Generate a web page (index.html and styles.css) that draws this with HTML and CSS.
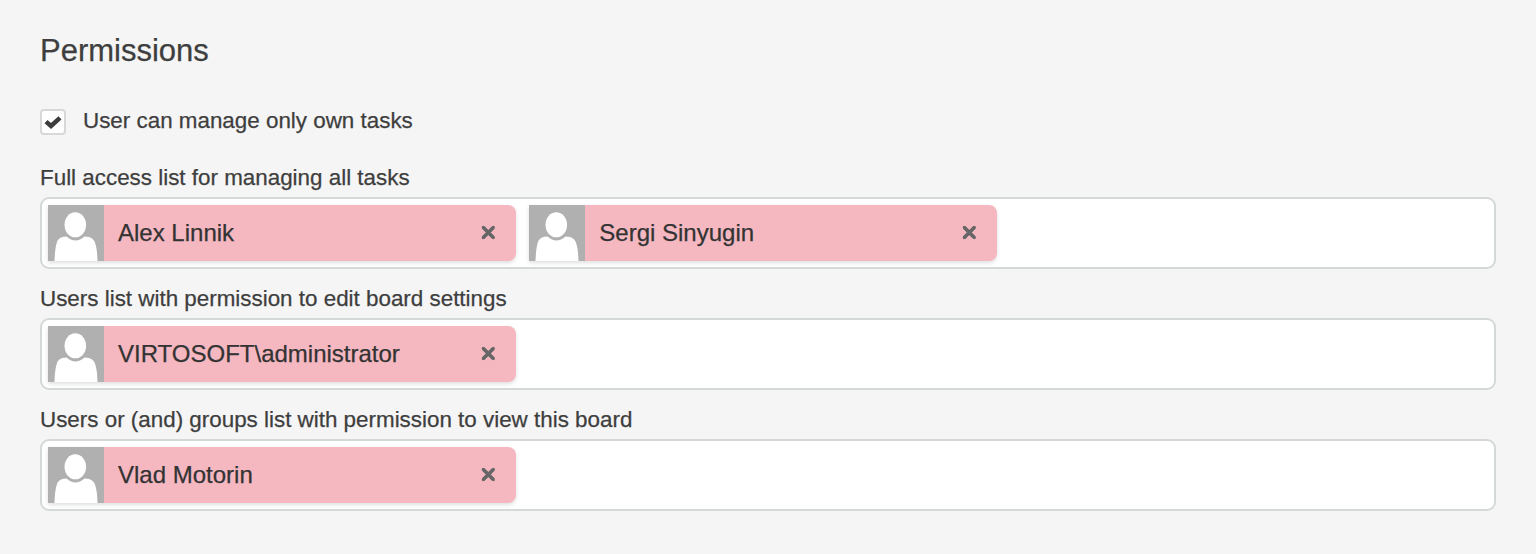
FILE: index.html
```html
<!doctype html>
<html lang="en">
<head>
  <meta charset="UTF-8">
  <title>Permissions</title>
  <link rel="stylesheet" href="styles.css">
</head>
<body>
  <svg class="sprite" width="0" height="0">
    <symbol id="avatar" viewBox="0 0 56 56">
      <rect width="56" height="56" fill="#b0b0b0"/>
      <path d="M6.500 56C6.800 48 7.500 41 9 37C10.500 33 14 31.800 18.500 31.600Q27.500 39.500 36.500 31.600C41.500 31.800 45 33 46.700 37C48.500 41 49.300 48 49.500 56Z" fill="#fff"/>
      <ellipse cx="27.300" cy="19.800" rx="10.800" ry="12.500" fill="#fff"/>
    </symbol>
    <symbol id="cross" viewBox="0 0 16 16">
      <path d="M3.100 2.300L13.500 12.700M13.500 2.300L3.100 12.700" stroke="#666" stroke-width="3.500" stroke-linecap="butt" fill="none"/>
      <path d="M3.100 2.300L13.500 12.700M13.500 2.300L3.100 12.700" stroke="#666" stroke-width="2.800" stroke-linecap="round" fill="none"/>
    </symbol>
  </svg>
  <div class="permissions">
    <h2>Permissions</h2>
    <div class="check-row">
      <span class="checkbox"><svg width="18" height="15" viewBox="0 0 18 15"><path d="M2 6.600L7 11L16 2.800" stroke="#3c3c3c" stroke-width="4.500" fill="none"/></svg></span>
      <span class="label">User can manage only own tasks</span>
    </div>
    <div class="field">
      <div class="label">Full access list for managing all tasks</div>
      <div class="people">
        <div class="chip"><svg class="avatar"><use href="#avatar"/></svg><span class="name">Alex Linnik</span><svg class="remove"><use href="#cross"/></svg></div>
        <div class="chip"><svg class="avatar"><use href="#avatar"/></svg><span class="name">Sergi Sinyugin</span><svg class="remove"><use href="#cross"/></svg></div>
      </div>
    </div>
    <div class="field">
      <div class="label">Users list with permission to edit board settings</div>
      <div class="people">
        <div class="chip"><svg class="avatar"><use href="#avatar"/></svg><span class="name">VIRTOSOFT\administrator</span><svg class="remove"><use href="#cross"/></svg></div>
      </div>
    </div>
    <div class="field">
      <div class="label">Users or (and) groups list with permission to view this board</div>
      <div class="people">
        <div class="chip"><svg class="avatar"><use href="#avatar"/></svg><span class="name">Vlad Motorin</span><svg class="remove"><use href="#cross"/></svg></div>
      </div>
    </div>
  </div>
</body>
</html>
```
FILE: styles.css
```css
* {box-sizing: border-box;}
body {margin: 0; background: #f5f5f5; color: #3e3e3e; font-family: "Liberation Sans", Arial, sans-serif; -webkit-text-stroke: .25px;}
.sprite {display: block; height: 0;}
.permissions {padding: 30px 40px 0;}
h2 {height: 40px; margin: 0; font-size: 31px; font-weight: normal; line-height: 42px;}
.label {height: 30px; font-size: 22.400px; line-height: 32px; white-space: nowrap;}
.check-row {display: flex; gap: 17px; height: 30px; margin-top: 35px;}
.checkbox {display: flex; align-items: center; justify-content: center; width: 26px; height: 26px; margin-top: 4px; background: #fff; border: 2px solid #d8d8d8; border-radius: 4px;}
.check-row + .field {margin-top: 27px;}
.field {height: 121px;}
.people {display: flex; gap: 13.500px; height: 72px; margin-top: 5px; padding: 6px; background: #fff; border: 2px solid #d5d8d8; border-radius: 9px;}
.chip {display: flex; align-items: center; width: 467.800px; height: 56px; background: #f5b8c1; border-radius: 0 8px 8px 0; box-shadow: 0 2px 4px rgba(0,0,0,.13);}
.avatar {width: 56px; height: 56px;}
.name {flex: 1; padding-left: 14px; font-size: 24px; line-height: 30px; color: #333;}
.remove {width: 16px; height: 16px; margin-right: 20px;}
```
